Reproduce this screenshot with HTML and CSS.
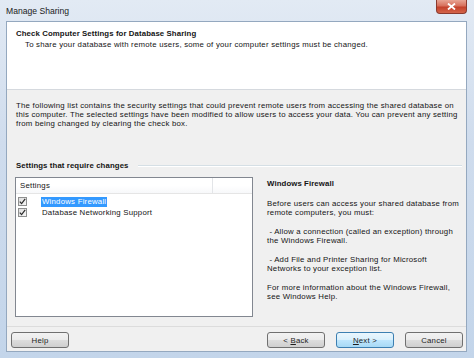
FILE: index.html
```html
<!DOCTYPE html>
<html lang="en">
<head>
    <meta charset="UTF-8">
    <title>Manage Sharing</title>
    <link rel="stylesheet" href="styles.css">
</head>
<body>
<div class="window">

    <!-- Title bar -->
    <div class="titlebar">
        <span class="title">Manage Sharing</span>
        <span class="close">
            <svg width="9" height="7" viewBox="0 0 9 7"><path d="M1 0.5 L8 6.5 M8 0.5 L1 6.5" stroke="#fff" stroke-width="1.8"/></svg>
        </span>
    </div>

    <div class="client">
        <!-- Wizard header -->
        <div class="header">
            <h1>Check Computer Settings for Database Sharing</h1>
            <p>To share your database with remote users, some of your computer settings must be changed.</p>
        </div>

        <!-- Main content -->
        <div class="content">
            <p class="intro">The following list contains the security settings that could prevent remote users from accessing the shared database on<br>this computer. The selected settings have been modified to allow users to access your data. You can prevent any setting<br>from being changed by clearing the check box.</p>

            <div class="group-label"><span>Settings that require changes</span></div>

            <div class="panes">
                <div class="listbox">
                    <div class="list-head">
                        <span class="col-name">Settings</span>
                        <span class="col-rest"></span>
                    </div>
                    <div class="row">
                        <span class="check"><svg width="7" height="7" viewBox="0 0 7 7"><path d="M0.8 3.6 L2.6 5.6 L6.2 0.8" fill="none" stroke="#2b2b2b" stroke-width="1.2"/></svg></span>
                        <span class="label selected">Windows Firewall</span>
                    </div>
                    <div class="row">
                        <span class="check"><svg width="7" height="7" viewBox="0 0 7 7"><path d="M0.8 3.6 L2.6 5.6 L6.2 0.8" fill="none" stroke="#2b2b2b" stroke-width="1.2"/></svg></span>
                        <span class="label">Database Networking Support</span>
                    </div>
                </div>

                <div class="details">
                    <h2>Windows Firewall</h2>
                    <p>Before users can access your shared database from<br>remote computers, you must:</p>
                    <p>&nbsp;- Allow a connection (called an exception) through<br>the Windows Firewall.</p>
                    <p>&nbsp;- Add File and Printer Sharing for Microsoft<br>Networks to your exception list.</p>
                    <p>For more information about the Windows Firewall,<br>see Windows Help.</p>
                </div>
            </div>
        </div>

        <!-- Buttons -->
        <div class="footer">
            <button class="btn">Help</button>
            <div class="nav">
                <button class="btn">&lt; <u>B</u>ack</button>
                <button class="btn default"><u>N</u>ext &gt;</button>
                <button class="btn">Cancel</button>
            </div>
        </div>
    </div>
</div>
</body>
</html>
```

FILE: styles.css
```css
body {
    margin: 0;
    font-family: "Liberation Sans", Arial, sans-serif;
    font-size: 7.8px;
    letter-spacing: 0.23px;
    color: #141414;
}

.window {
    width: 474px;
    height: 358px;
    background: linear-gradient(180deg, #e2eaf4 0%, #cfdced 40%, #c3d5ea 100%);
    display: flex;
    flex-direction: column;
    overflow: hidden;
}

/* Title bar */
.titlebar {
    height: 21px;
    display: flex;
    justify-content: space-between;
    align-items: flex-start;
    padding: 0 7px 0 6px;
}

.titlebar .title {
    font-size: 8.6px;
    letter-spacing: 0;
    line-height: 11px;
    margin-top: 6px;
    color: #1b1b1b;
}

.close {
    width: 31px;
    height: 14px;
    box-sizing: border-box;
    border: 1px solid #8b3a2e;
    border-top: none;
    border-radius: 0 0 4px 4px;
    background: linear-gradient(180deg, #e8a493 0%, #d7705c 45%, #c4412b 55%, #d4654a 100%);
    display: flex;
    align-items: center;
    justify-content: center;
}

/* Client area */
.client {
    margin: 0 7px 6px 6px;
    height: 331px;
    box-sizing: border-box;
    border: 1px solid #94a8bf;
    background: #f0f0f0;
    display: flex;
    flex-direction: column;
}

.header {
    height: 68px;
    box-sizing: border-box;
    background: #fff;
    border-bottom: 1px solid #d5d9de;
    padding: 6px 9px 0 9px;
}

.header h1 {
    margin: 0;
    font-size: 7.8px;
    font-weight: bold;
    letter-spacing: 0.1px;
    line-height: 11px;
}

.header p {
    margin: 0;
    padding-left: 9px;
    line-height: 11px;
}

.content {
    flex: 1;
    padding: 11px 4px 0 9px;
}

.intro {
    margin: 0;
    line-height: 9px;
    white-space: nowrap;
}

.group-label {
    display: flex;
    align-items: center;
    margin-top: 32px;
    height: 11px;
    font-weight: bold;
    letter-spacing: 0.1px;
}

.group-label::after {
    content: "";
    flex: 1;
    margin-left: 9px;
    border-top: 1px solid #d5dfe5;
    border-bottom: 1px solid #fff;
}

.panes {
    display: flex;
    margin-top: 6px;
}

/* Settings list */
.listbox {
    width: 238px;
    height: 140px;
    margin-left: -1px;
    box-sizing: border-box;
    border: 1px solid #828790;
    background: #fff;
}

.list-head {
    display: flex;
    height: 15px;
    border-bottom: 1px solid #e5e5e5;
    background: linear-gradient(180deg, #fff 0%, #fff 50%, #f7f8fa 100%);
    margin-bottom: 2px;
}

.col-name {
    width: 192px;
    border-right: 1px solid #e3e5e8;
    padding-left: 4px;
    line-height: 15px;
}

.col-rest {
    flex: 1;
}

.row {
    display: flex;
    align-items: center;
    height: 11px;
    padding-left: 2px;
}

.check {
    width: 9px;
    height: 9px;
    box-sizing: border-box;
    border: 1px solid #8e8f8f;
    background: linear-gradient(135deg, #dedede 0%, #f6f6f6 100%);
    display: flex;
    align-items: center;
    justify-content: center;
    margin-right: 14px;
}

.label {
    line-height: 10px;
    padding: 0 1px;
}

.label.selected {
    background: #3399ff;
    color: #fff;
}

/* Description pane */
.details {
    padding: 2px 0 0 14px;
    line-height: 9px;
    white-space: nowrap;
}

.details h2 {
    margin: 0 0 11px 0;
    font-size: 7.8px;
    font-weight: bold;
    letter-spacing: 0.1px;
    line-height: 9px;
}

.details p {
    margin: 0 0 10px 0;
}

/* Footer */
.footer {
    height: 25px;
    box-sizing: border-box;
    border-top: 1px solid #dcdcdc;
    display: flex;
    justify-content: space-between;
    align-items: flex-start;
    padding: 5px 3px 0 4px;
}

.nav {
    display: flex;
    gap: 11px;
}

.btn {
    width: 58px;
    height: 16px;
    padding: 0;
    font-family: "Liberation Sans", Arial, sans-serif;
    font-size: 7.8px;
    letter-spacing: 0.23px;
    color: #1e1e1e;
    border: 1px solid #707070;
    border-radius: 3px;
    background: linear-gradient(180deg, #f2f2f2 0%, #ebebeb 48%, #dddddd 52%, #cfcfcf 100%);
}

.btn.default {
    border-color: #3c7fb1;
    background: linear-gradient(180deg, #eaf6fd 0%, #d9f0fc 48%, #bee6fd 52%, #a7d9f5 100%);
}
```
